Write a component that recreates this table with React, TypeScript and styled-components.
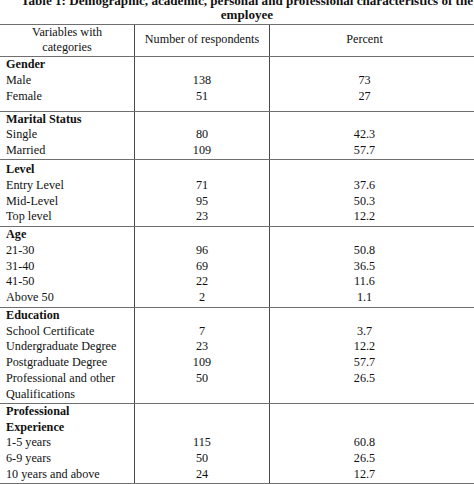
import React from "react";
import styled, { createGlobalStyle } from "styled-components";

const Global = createGlobalStyle`
  html, body { margin: 0; padding: 0; background: #ffffff; overflow: hidden; }
  body { font-family: "Liberation Serif", "Times New Roman", serif; color: #111; }
`;

const Page = styled.div`
  width: 494px;
`;

const Title = styled.div`
  margin: -5.7px 0 2.2px 0;
  text-align: center;
  font-weight: bold;
  font-size: 13.1px;
  line-height: 13.5px;
  white-space: nowrap;
`;

const Table = styled.div`
  border-top: 1px solid #6f6f6f;
  font-size: 12.2px;
  line-height: 15.75px;
`;

const Section = styled.div<{ $pt?: number; $pb?: number }>`
  display: grid;
  grid-template-columns: 135px 135px 1fr;
  border-bottom: 1px solid #6f6f6f;
  & > * {
    padding-top: ${(p) => p.$pt ?? 0}px;
    padding-bottom: ${(p) => p.$pb ?? 0}px;
  }
`;

const Cell = styled.div<{ $align?: "left" | "center"; $last?: boolean; $middle?: boolean }>`
  display: flex;
  flex-direction: column;
  justify-content: ${(p) => (p.$middle ? "center" : "flex-start")};
  text-align: ${(p) => p.$align ?? "center"};
  border-right: ${(p) => (p.$last ? "none" : "1px solid #4a4a4a")};
  padding-left: ${(p) => (p.$align === "left" ? "6px" : "0")};
  padding-right: ${(p) => (p.$last ? "35px" : "0")};
`;

const Line = styled.div<{ $bold?: boolean }>`
  height: 15.75px;
  white-space: nowrap;
  font-weight: ${(p) => (p.$bold ? "bold" : "normal")};
`;

type Row = { label: string[]; n: string; p: string };
type Group = { title: string[]; rows: Row[]; pt?: number; pb?: number };

const groups: Group[] = [
  {
    title: ["Gender"],
    pb: 6.35,
    rows: [
      { label: ["Male"], n: "138", p: "73" },
      { label: ["Female"], n: "51", p: "27" },
    ],
  },
  {
    title: ["Marital Status"],
    rows: [
      { label: ["Single"], n: "80", p: "42.3" },
      { label: ["Married"], n: "109", p: "57.7" },
    ],
  },
  {
    title: ["Level"],
    pt: 2.4,
    pb: 1,
    rows: [
      { label: ["Entry Level"], n: "71", p: "37.6" },
      { label: ["Mid-Level"], n: "95", p: "50.3" },
      { label: ["Top level"], n: "23", p: "12.2" },
    ],
  },
  {
    title: ["Age"],
    pb: 0.85,
    rows: [
      { label: ["21-30"], n: "96", p: "50.8" },
      { label: ["31-40"], n: "69", p: "36.5" },
      { label: ["41-50"], n: "22", p: "11.6" },
      { label: ["Above 50"], n: "2", p: "1.1" },
    ],
  },
  {
    title: ["Education"],
    pb: 0.5,
    rows: [
      { label: ["School Certificate"], n: "7", p: "3.7" },
      { label: ["Undergraduate Degree"], n: "23", p: "12.2" },
      { label: ["Postgraduate Degree"], n: "109", p: "57.7" },
      { label: ["Professional and other", "Qualifications"], n: "50", p: "26.5" },
    ],
  },
  {
    title: ["Professional", "Experience"],
    rows: [
      { label: ["1-5 years"], n: "115", p: "60.8" },
      { label: ["6-9 years"], n: "50", p: "26.5" },
      { label: ["10 years and above"], n: "24", p: "12.7" },
    ],
  },
];

function valueLines(g: Group, key: "n" | "p") {
  const out: string[] = g.title.map(() => "");
  g.rows.forEach((r) => {
    out.push(r[key]);
    for (let i = 1; i < r.label.length; i++) out.push("");
  });
  return out;
}

export default function App() {
  return (
    <>
      <Global />
      <Page>
        <Title>
          Table 1: Demographic, academic, personal and professional characteristics of the
          <br />
          employee
        </Title>
        <Table>
          <Section>
            <Cell>
              <Line>Variables with</Line>
              <Line>categories</Line>
            </Cell>
            <Cell $middle>
              <Line>Number of respondents</Line>
            </Cell>
            <Cell $middle $last>
              <Line>Percent</Line>
            </Cell>
          </Section>
          {groups.map((g, gi) => (
            <Section key={gi} $pt={g.pt} $pb={g.pb}>
              <Cell $align="left">
                {g.title.map((t, i) => (
                  <Line key={"t" + i} $bold>
                    {t}
                  </Line>
                ))}
                {g.rows.flatMap((r, ri) =>
                  r.label.map((l, li) => <Line key={ri + "-" + li}>{l}</Line>)
                )}
              </Cell>
              <Cell>
                {valueLines(g, "n").map((v, i) => (
                  <Line key={i}>{v}</Line>
                ))}
              </Cell>
              <Cell $last>
                {valueLines(g, "p").map((v, i) => (
                  <Line key={i}>{v}</Line>
                ))}
              </Cell>
            </Section>
          ))}
        </Table>
      </Page>
    </>
  );
}
